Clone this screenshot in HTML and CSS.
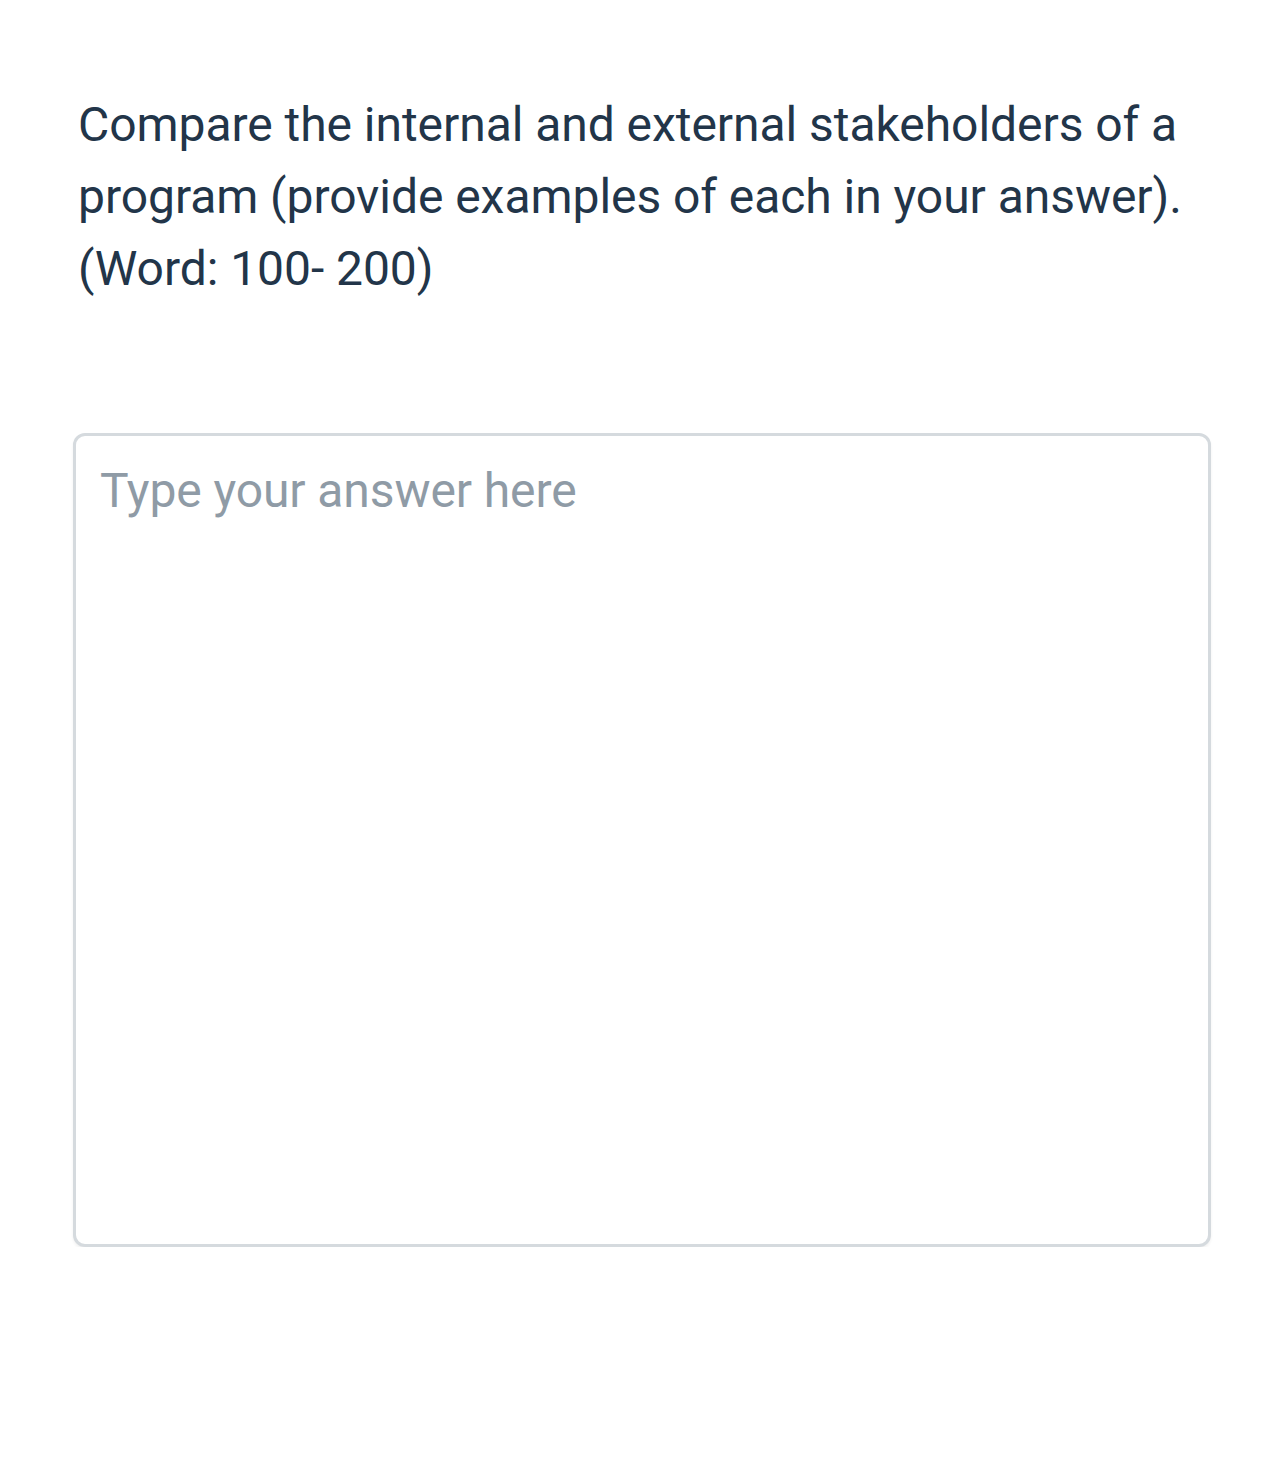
FILE: index.html
```html
<!DOCTYPE html>
<html>
<head>
<meta charset="utf-8">
<link rel="stylesheet" href="styles.css">
</head>
<body>
<main class="page">
  <p class="question">Compare the internal and external stakeholders of a program (provide examples of each in your answer). (Word: 100- 200)</p>
  <textarea class="answer" placeholder="Type your answer here"></textarea>
</main>
</body>
</html>
```
FILE: styles.css
```css
html, body {
  margin: 0;
  padding: 0;
  background: #ffffff;
}
.page {
  padding: 89px 73px 0 73px;
  display: flex;
  flex-direction: column;
}
.question {
  margin: 0 0 0 5px;
  font-family: Roboto, "Liberation Sans", sans-serif;
  font-size: 48px;
  line-height: 72px;
  letter-spacing: -0.05px;
  color: #223549;
  font-weight: 400;
}
.answer {
  margin-top: 128px;
  box-sizing: border-box;
  width: 1138px;
  height: 814px;
  border: 3px solid #d5dade;
  border-radius: 12px;
  padding: 23px 24px;
  font-family: Roboto, "Liberation Sans", sans-serif;
  font-size: 48px;
  line-height: 64px;
  letter-spacing: -0.1px;
  color: #223549;
  resize: none;
  outline: none;
  box-shadow: 0 2px 3px rgba(0,0,0,0.06);
}
.answer::placeholder {
  color: #8f9ba6;
}
```
